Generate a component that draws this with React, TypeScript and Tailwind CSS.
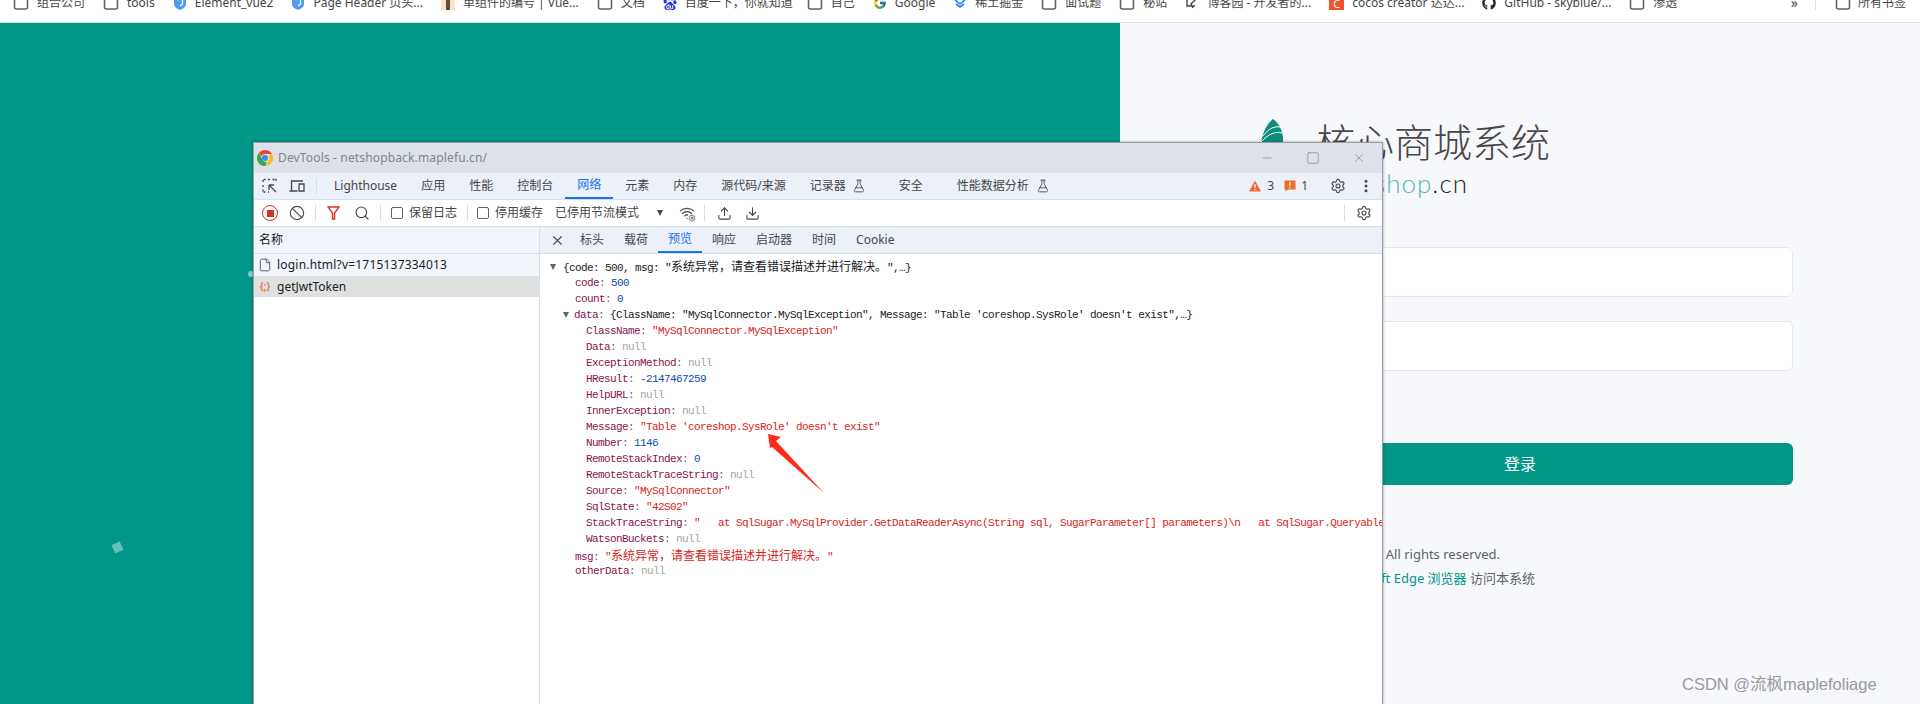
import type { ReactNode } from 'react';
import { Ban, Download, EllipsisVertical, File, FlaskConical, Minus, Search, Settings, Square, Upload, Wifi, X } from 'lucide-react';
import { FaGithub } from 'react-icons/fa';
import { FcGoogle } from 'react-icons/fc';
import { SiBaidu } from 'react-icons/si';

const FolderIcon = () => (
    <svg className="h-[14px] w-4 shrink-0" viewBox="0 0 16 14" fill="none" stroke="#5f6368" strokeWidth="1.6">
        <path d="M1.5 -4v15a2 2 0 0 0 2 2h9a2 2 0 0 0 2-2V-4" />
    </svg>
);

const ShieldIcon = () => (
    <svg className="h-[14px] w-[14px] shrink-0" viewBox="0 0 14 14">
        <path d="M7 -2 13 1v7c0 3-3 5-6 6-3-1-6-3-6-6V1z" fill="#4f9cf0" />
        <path d="M4.5 4 7 2.5 9.500 4v4L7 10" fill="none" stroke="#fff" strokeWidth="1.2" />
    </svg>
);

const bookmarks: { label: string; icon: ReactNode; className?: string }[] = [
    { label: '组合公司', icon: <FolderIcon /> },
    { label: 'tools', icon: <FolderIcon /> },
    { label: 'Element_vue2', icon: <ShieldIcon /> },
    { label: 'Page Header 页头...', icon: <ShieldIcon /> },
    { label: '单组件的编号 | Vue...', icon: <span className="h-[14px] w-[14px] shrink-0 bg-[linear-gradient(90deg,#f2e4cf_35%,#6b4a32_35%,#6b4a32_65%,#f2e4cf_65%)]" /> },
    { label: '文档', icon: <FolderIcon /> },
    { label: '百度一下，你就知道', icon: <SiBaidu className="h-[14px] w-[14px] shrink-0 text-[#2932e1]" />, className: '-mr-[4px]' },
    { label: '自己', icon: <FolderIcon /> },
    { label: 'Google', icon: <FcGoogle className="h-[14px] w-[14px] shrink-0" /> },
    {
        label: '稀土掘金',
        icon: (
            <svg className="h-[14px] w-[14px] shrink-0" viewBox="0 0 14 14" fill="none" stroke="#1e80ff" strokeWidth="1.6">
                <path d="M1 3l6 5 6-5M3 8l4 3 4-3" />
            </svg>
        ),
    },
    { label: '面试题', icon: <FolderIcon /> },
    { label: '秘站', icon: <FolderIcon /> },
    {
        label: '博客园 - 开发者的...',
        icon: (
            <svg className="h-[14px] w-[14px] shrink-0" viewBox="0 0 14 14" fill="none" stroke="#444" strokeWidth="1.4">
                <path d="M2 -2v12h8M12 2 6 8l2 4" />
            </svg>
        ),
    },
    {
        label: 'cocos creator 达达...',
        icon: (
            <span className="flex h-[14px] w-[15px] shrink-0 items-center justify-center bg-[#f4502a] text-[11px] leading-none text-white">C</span>
        ),
    },
    { label: 'GitHub - skyblue/...', icon: <FaGithub className="h-[14px] w-[14px] shrink-0 text-[#24292f]" /> },
    { label: '渗透', icon: <FolderIcon /> },
];

const mainTabs = ['Lighthouse', '应用', '性能', '控制台', '网络', '元素', '内存', '源代码/来源'];
const detailTabs = ['标头', '载荷', '预览', '响应', '启动器', '时间', 'Cookie'];

const Key = ({ children }: { children: ReactNode }) => (
    <>
        <span className="text-[#881350]">{children}</span>
        <span className="text-[#5f6368]">: </span>
    </>
);
const Str = ({ children }: { children: ReactNode }) => <span className="text-[#d9231c]">{children}</span>;
const Num = ({ children }: { children: ReactNode }) => <span className="text-[#0b4fa8]">{children}</span>;
const Nul = () => <span className="text-[#a5a5a5]">null</span>;
const Cjk = ({ children }: { children: ReactNode }) => (
    <span className="font-['Noto_Sans_CJK_SC',sans-serif] text-[12px] tracking-normal">{children}</span>
);
const Caret = () => <span className="h-0 w-0 border-x-[3.5px] border-t-[6px] border-x-transparent border-t-[#5f6368]" />;
const Sep = () => <span className="h-4 w-px shrink-0 bg-[#d3e0f3]" />;

const Level1 = ({ children }: { children: ReactNode }) => <div className="h-4 pl-[35px] leading-4">{children}</div>;
const Level2 = ({ children }: { children: ReactNode }) => <div className="h-4 pl-[46px] leading-4">{children}</div>;

function JsonPreview() {
    return (
        <div className="min-w-0 flex-1 overflow-hidden bg-white pt-[5px] font-['Liberation_Mono','Noto_Sans_CJK_SC',monospace] text-[11px] tracking-[-0.6px] whitespace-pre text-[#202124]">
            <div className="flex h-4 items-center gap-[7px] pl-[10px] leading-4">
                <Caret />
                <span>
                    {'{code: 500, msg: "'}
                    <Cjk>系统异常，请查看错误描述并进行解决。</Cjk>
                    {'",…}'}
                </span>
            </div>
            <Level1>
                <Key>code</Key>
                <Num>500</Num>
            </Level1>
            <Level1>
                <Key>count</Key>
                <Num>0</Num>
            </Level1>
            <div className="flex h-4 items-center gap-[5px] pl-[23px] leading-4">
                <Caret />
                <span>
                    <Key>data</Key>
                    {`{ClassName: "MySqlConnector.MySqlException", Message: "Table 'coreshop.SysRole' doesn't exist",…}`}
                </span>
            </div>
            <Level2>
                <Key>ClassName</Key>
                <Str>"MySqlConnector.MySqlException"</Str>
            </Level2>
            <Level2>
                <Key>Data</Key>
                <Nul />
            </Level2>
            <Level2>
                <Key>ExceptionMethod</Key>
                <Nul />
            </Level2>
            <Level2>
                <Key>HResult</Key>
                <Num>-2147467259</Num>
            </Level2>
            <Level2>
                <Key>HelpURL</Key>
                <Nul />
            </Level2>
            <Level2>
                <Key>InnerException</Key>
                <Nul />
            </Level2>
            <Level2>
                <Key>Message</Key>
                <Str>"Table 'coreshop.SysRole' doesn't exist"</Str>
            </Level2>
            <Level2>
                <Key>Number</Key>
                <Num>1146</Num>
            </Level2>
            <Level2>
                <Key>RemoteStackIndex</Key>
                <Num>0</Num>
            </Level2>
            <Level2>
                <Key>RemoteStackTraceString</Key>
                <Nul />
            </Level2>
            <Level2>
                <Key>Source</Key>
                <Str>"MySqlConnector"</Str>
            </Level2>
            <Level2>
                <Key>SqlState</Key>
                <Str>"42S02"</Str>
            </Level2>
            <Level2>
                <Key>StackTraceString</Key>
                <Str>{'"   at SqlSugar.MySqlProvider.GetDataReaderAsync(String sql, SugarParameter[] parameters)\\n   at SqlSugar.QueryableProvider.ToList()'}</Str>
            </Level2>
            <Level2>
                <Key>WatsonBuckets</Key>
                <Nul />
            </Level2>
            <Level1>
                <Key>msg</Key>
                <Str>
                    "<Cjk>系统异常，请查看错误描述并进行解决。</Cjk>"
                </Str>
            </Level1>
            <Level1>
                <Key>otherData</Key>
                <Nul />
            </Level1>
        </div>
    );
}

function DevTools() {
    return (
        <div className="absolute top-[142px] bottom-0 left-[253px] flex w-[1130px] flex-col overflow-hidden border border-b-0 border-[#9a9da1] bg-white font-['Noto_Sans','Noto_Sans_CJK_SC',sans-serif] text-[12px] text-[#474747] shadow-[0_0_3px_rgba(0,0,0,0.35)]">
            <div className="flex h-[30px] shrink-0 items-center bg-[#dde1e9] pl-[3px]">
                <svg className="h-4 w-4" viewBox="0 0 16 16">
                    <path d="M8 0a8 8 0 0 1 7 4H8a4 4 0 0 0-3.600 2.300L1.800 2.900A8 8 0 0 1 8 0z" fill="#ea4335" />
                    <path d="M15 4a8 8 0 0 1-6.500 12l3-5.200A4 4 0 0 0 11.500 6z" fill="#fbbc04" />
                    <path d="M1.800 2.900 5 8.500A4 4 0 0 0 9.500 11.800L8.500 16A8 8 0 0 1 1.800 2.900z" fill="#34a853" />
                    <circle cx="8" cy="8" r="3" fill="#4285f4" />
                </svg>
                <span className="ml-[5px] tracking-[0.15px] text-[#80868b]">DevTools - netshopback.maplefu.cn/</span>
                <div className="ml-auto flex items-center gap-[32px] pr-[16px] text-[#777]">
                    <Minus size={14} strokeWidth={1} />
                    <Square size={14} strokeWidth={1} />
                    <X size={14} strokeWidth={1} />
                </div>
            </div>

            <div className="flex h-[27px] shrink-0 items-stretch border-b border-[#d3e0f3] bg-[#ebf0f9]">
                <div className="flex w-[62px] items-center gap-[11px] pl-[8px]">
                    <svg className="h-4 w-4" viewBox="0 0 16 16" fill="none" stroke="#474747" strokeWidth="1.300">
                        <path d="M1 4V1.500h2.500M6 1.500h2M10.500 1.500H14V4M1 7v2M1 11.500V14h2.500M6 14h1" strokeDasharray="2 1" />
                        <path d="M7 7l7 7M7 7h5M7 7v5" />
                    </svg>
                    <svg className="h-4 w-4" viewBox="0 0 16 16" fill="none" stroke="#474747" strokeWidth="1.300">
                        <path d="M0.500 13h8M2.500 13V3H14M10 6h5v7h-5z" />
                    </svg>
                </div>
                <div className="flex items-center">
                    <Sep />
                </div>
                <div className="ml-[5px] flex">
                    {mainTabs.map((tab) => (
                        <span
                            key={tab}
                            className={`flex items-center px-3 ${tab === '网络' ? 'border-b-2 border-[#1a73e8] text-[#1a73e8]' : ''}`}
                        >
                            {tab}
                        </span>
                    ))}
                    <span className="flex items-center gap-[6px] px-3">
                        记录器
                        <FlaskConical size={14} strokeWidth={1.5} />
                    </span>
                    <span className="ml-[9px] flex items-center px-3">安全</span>
                    <span className="ml-[10px] flex items-center gap-[7px] px-3">
                        性能数据分析
                        <FlaskConical size={14} strokeWidth={1.5} />
                    </span>
                </div>
                <div className="ml-auto flex items-center pr-[9px]">
                    <svg className="h-[12px] w-[12px]" viewBox="0 0 12 12">
                        <path d="M6 0.500 12 11.500H0z" fill="#ee6c2c" />
                        <path d="M5.400 4h1.200v4H5.400zM5.400 9h1.200v1.300H5.400z" fill="#fff" />
                    </svg>
                    <span className="ml-[6px]">3</span>
                    <svg className="ml-[10px] h-[12px] w-[12px]" viewBox="0 0 12 12">
                        <path d="M0.500 0.500h11v9H4L1.500 11.500V9.500h-1z" fill="#ee6c2c" />
                        <path d="M5.400 2h1.200v4H5.400zM5.400 7h1.200v1.300H5.400z" fill="#fff" />
                    </svg>
                    <span className="ml-[5px]">1</span>
                    <span className="ml-[13px]">
                        <Sep />
                    </span>
                </div>
                <div className="flex items-center gap-[12px] pr-[8px]">
                    <Settings size={16} strokeWidth={1.7} />
                    <EllipsisVertical size={16} strokeWidth={2.500} />
                </div>
            </div>

            <div className="flex h-[27px] shrink-0 items-center border-b border-[#d3e0f3] bg-white pl-[8px]">
                <span className="flex h-4 w-4 items-center justify-center rounded-full border-[1.500px] border-[#d93025]">
                    <span className="h-[7px] w-[7px] bg-[#d93025]" />
                </span>
                <Ban className="ml-[11px]" size={16} strokeWidth={1.700} />
                <span className="ml-[10px] flex">
                    <Sep />
                </span>
                <svg className="ml-[11px] h-[14px] w-[13px]" viewBox="0 0 13 14" fill="none" stroke="#d93025" strokeWidth="1.400">
                    <path d="M1 1h11L7.500 7v6h-2V7z" />
                </svg>
                <Search className="ml-[14px]" size={16} strokeWidth={1.700} />
                <span className="ml-[10px] flex">
                    <Sep />
                </span>
                <span className="ml-[10px] h-3 w-3 rounded-[2px] border border-[#5f6368] bg-white" />
                <span className="ml-[6px]">保留日志</span>
                <span className="ml-[10px] flex">
                    <Sep />
                </span>
                <span className="ml-[9px] h-3 w-3 rounded-[2px] border border-[#5f6368] bg-white" />
                <span className="ml-[6px]">停用缓存</span>
                <span className="ml-[12px]">已停用节流模式</span>
                <span className="ml-[18px] h-0 w-0 border-x-[3.500px] border-t-[6px] border-x-transparent border-t-[#474747]" />
                <span className="relative ml-[16px] flex">
                    <Wifi size={16} strokeWidth={1.700} />
                    <Settings className="absolute -right-px -bottom-px bg-white" size={8} strokeWidth={2} />
                </span>
                <span className="ml-[9px] flex">
                    <Sep />
                </span>
                <Upload className="ml-[12px]" size={15} strokeWidth={1.700} />
                <Download className="ml-[13px]" size={15} strokeWidth={1.700} />
                <span className="ml-auto flex">
                    <Sep />
                </span>
                <Settings className="mr-[10px] ml-[11px]" size={16} strokeWidth={1.700} />
            </div>

            <div className="flex min-h-0 flex-1">
                <div className="flex w-[286px] shrink-0 flex-col border-r border-[#d3e0f3] bg-white">
                    <div className="flex h-[27px] shrink-0 items-center border-b border-[#d3e0f3] bg-[#f1f4fa] pl-[5px] text-[#202124]">名称</div>
                    <div className="flex h-[22px] shrink-0 items-center gap-[5px] bg-[#f1f4fa] pl-[4px] tracking-[0.2px] text-[#202124]">
                        <File size={14} strokeWidth={1.700} className="text-[#5f6368]" />
                        login.html?v=1715137334013
                    </div>
                    <div className="flex h-[21px] shrink-0 items-center gap-[5px] bg-[#dfe1e0] pl-[4px] text-[#202124]">
                        <span className="w-[14px] text-center text-[10px] font-semibold text-[#e8743b]">{'{;}'}</span>
                        getJwtToken
                    </div>
                </div>
                <div className="flex min-w-0 flex-1 flex-col">
                    <div className="flex h-[27px] shrink-0 items-stretch border-b border-[#d3e0f3] bg-[#ebf0f9] pl-[10px]">
                        <span className="flex items-center">
                            <X size={15} strokeWidth={1.700} />
                        </span>
                        <div className="ml-[5px] flex">
                            {detailTabs.map((tab) => (
                                <span
                                    key={tab}
                                    className={`flex items-center px-[10px] ${tab === '预览' ? 'border-b-2 border-[#1a73e8] text-[#1a73e8]' : ''}`}
                                >
                                    {tab}
                                </span>
                            ))}
                        </div>
                    </div>
                    <JsonPreview />
                </div>
            </div>
        </div>
    );
}

function LoginPanel() {
    return (
        <div className="min-w-0 flex-1 bg-[#f6f8fc] pt-[96px] pl-[127px] font-['Noto_Sans','Noto_Sans_CJK_SC',sans-serif]">
            <div className="w-[546px]">
                <div className="flex h-[46px] items-start pl-[13px]">
                    <svg className="h-[46px] w-[24px] shrink-0" viewBox="0 0 24 46">
                        <path d="M13 0C20 5 24 14 23 24 22 34 16 42 9 46 2 38-1 29 2 19 4 11 8 4 13 0z" fill="#0b8f7c" />
                        <path d="M3 17C9 9 15 7 20 8M1 23C8 15 16 12 22 14" fill="none" stroke="#fff" strokeWidth="1" />
                    </svg>
                    <span className="ml-[32px] text-[39px] leading-[46px] font-light text-[#4a4646]">核心商城系统</span>
                </div>
                <div className="mt-[4px] flex h-[28px] justify-end pr-[325px] text-[26px] leading-[28px] font-light tracking-[1px]">
                    <span className="font-['Lato',sans-serif] text-[#55b8ac]">coreshop</span>
                    <span className="font-['Lato',sans-serif] text-[#1f1f1f]">.cn</span>
                </div>
                <input className="mt-[50px] block h-[50px] w-full rounded-md border border-[#e4e7f0] bg-white" aria-label="账号" />
                <input className="mt-6 block h-[50px] w-full rounded-md border border-[#e4e7f0] bg-white" aria-label="密码" />
                <button className="mt-[72px] block h-[42px] w-full rounded-md bg-[#009688] text-[16px] text-white">登录</button>
                <div className="mt-[60px] pr-[293px] text-right text-[13px] leading-[18px] text-[#5c5f6b]">
                    © 2024 CoreShop. All rights reserved.
                </div>
                <div className="mt-[6px] pr-[258px] text-right text-[13px] leading-[18px] text-[#5c5f6b]">
                    请使用 <span className="text-[#009688]">Microsoft Edge 浏览器</span> 访问本系统
                </div>
            </div>
        </div>
    );
}

export default function App() {
    return (
        <div className="relative h-[704px] w-[1920px] overflow-hidden bg-white">
            <div className="flex h-[23px] items-start overflow-hidden border-b border-[#dedede] bg-white font-['Noto_Sans','Noto_Sans_CJK_SC',sans-serif] text-[12px] leading-[14px] text-[#444746]">
                <div className="-mt-[4px] flex items-center gap-[18px] pl-[13px]">
                    {bookmarks.map((item, i) => (
                        <span key={i} className={`flex items-center gap-[8px] whitespace-nowrap ${item.className ?? ''}`}>
                            {item.icon}
                            {item.label}
                        </span>
                    ))}
                </div>
                <div className="-mt-[4px] ml-auto flex items-center pr-[14px]">
                    <span className="text-[14px]">»</span>
                    <span className="mr-[19px] ml-[17px] h-[14px] w-px bg-[#d3e0f3]" />
                    <span className="flex items-center gap-[7px]">
                        <FolderIcon />
                        所有书签
                    </span>
                </div>
            </div>

            <div className="flex h-[681px]">
                <div className="w-[1120px] shrink-0 bg-[#009688]" />
                <LoginPanel />
            </div>

            <span className="absolute top-[543px] left-[113px] h-[9px] w-[9px] rotate-[-25deg] bg-white/40" />
            <span className="absolute top-[271px] left-[248px] h-[6px] w-[6px] rounded-full bg-white/50" />

            <DevTools />

            <svg className="absolute top-[430px] left-[764px] h-[66px] w-[64px]" viewBox="0 0 64 66">
                <path d="M4 4 17 7 12 11 60 63 8 17 6 18z" fill="#ff2a1a" />
            </svg>

            <span className="absolute top-[673px] left-[1682px] font-['Liberation_Sans','Noto_Sans_CJK_SC',sans-serif] text-[16.500px] leading-[22px] whitespace-nowrap text-[#9a9a9a]">
                CSDN @流枫maplefoliage
            </span>
        </div>
    );
}
